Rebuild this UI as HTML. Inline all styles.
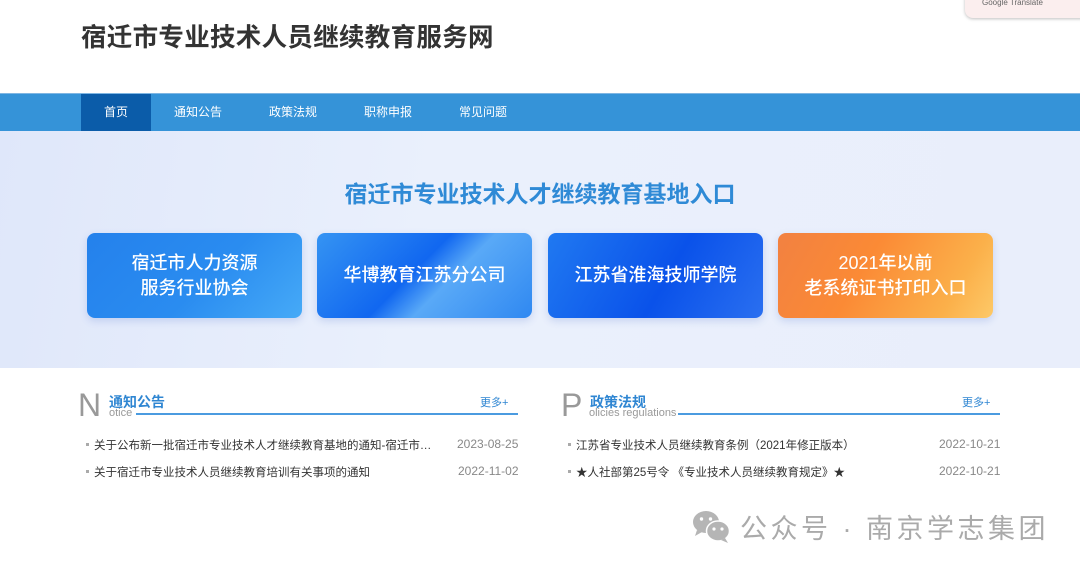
<!DOCTYPE html>
<html><head><meta charset="utf-8"><style>
*{margin:0;padding:0;box-sizing:border-box}
body{width:1080px;height:570px;overflow:hidden;background:#fff;font-family:"Liberation Sans","Noto Sans CJK SC",sans-serif;position:relative}
.a{position:absolute;white-space:nowrap}
.title{left:81px;top:17px;font-size:25.5px;font-weight:bold;color:#333;letter-spacing:0.3px}
.gt{left:965px;top:-10px;width:130px;height:28px;background:#fbeeee;border-radius:8px;box-shadow:0 1px 3px rgba(0,0,0,.25);font-size:8px;color:#666;padding:8px 0 0 17px}
.nav{left:0;top:93px;width:1080px;height:38px;background:#3593d8;border-top:1px solid #7fb6e3}
.nav span{position:absolute;top:0;height:37px;line-height:36px;color:#fff;font-size:12px;text-align:center}
.ban{left:0;top:131px;width:1080px;height:237px;background:linear-gradient(100deg,#dfe7fa 0%,#eaf0fc 40%,#e9eefb 100%)}
.h2{left:0;width:1080px;text-align:center;top:175px;font-size:23px;font-weight:bold;color:#2f8ad6}
.card{position:absolute;top:233px;width:215px;height:85px;border-radius:8px;color:#fff;font-size:18px;font-weight:500;display:flex;align-items:center;justify-content:center;text-align:center;line-height:25px;box-shadow:0 3px 8px rgba(60,100,200,.2);overflow:hidden}
.N{font-size:32px;color:#999;font-family:"Liberation Sans",sans-serif}
.ht{font-size:14px;font-weight:bold;color:#2f86d2}
.sub{font-size:11px;color:#999}
.more{font-size:11px;color:#2f86d2}
.li{font-size:11.5px;color:#333}
.dt{font-size:12px;color:#888}
.dot{width:3px;height:3px;background:#aaa}
.ln{height:2px;background:#4b9be0}
</style></head><body>
<div class="a title">宿迁市专业技术人员继续教育服务网</div>
<div class="a gt">Google Translate</div>
<div class="a nav">
<span style="left:81px;width:70px;background:#0b5ca9">首页</span>
<span style="left:163px;width:70px">通知公告</span>
<span style="left:258px;width:70px">政策法规</span>
<span style="left:353px;width:70px">职称申报</span>
<span style="left:448px;width:70px">常见问题</span>
</div>
<div class="a ban"></div>
<div class="a h2">宿迁市专业技术人才继续教育基地入口</div>
<div class="card" style="left:87px;background:linear-gradient(135deg,#2481ec 0%,#2a8cf0 55%,#46aaf7 100%)">宿迁市人力资源<br>服务行业协会</div>
<div class="card" style="left:317px;background:linear-gradient(135deg,#3594f3 0%,#1167f0 45%,#59a9f7 60%,#2f88f1 100%)">华博教育江苏分公司</div>
<div class="card" style="left:548px;background:linear-gradient(120deg,#2079f1 0%,#0a52ea 55%,#2a6ff0 100%)">江苏省淮海技师学院</div>
<div class="card" style="left:778px;background:linear-gradient(120deg,#f28141 0%,#fb8a35 40%,#fbb04a 80%,#fdc968 100%)">2021年以前<br>老系统证书打印入口</div>

<div class="a N" style="left:78px;top:387px">N</div>
<div class="a ht" style="left:109px;top:392px">通知公告</div>
<div class="a sub" style="left:109px;top:407px">otice</div>
<div class="a ln" style="left:136px;top:413px;width:382px"></div>
<div class="a more" style="left:480px;top:394px">更多+</div>
<div class="a dot" style="left:86px;top:443px"></div>
<div class="a li" style="left:94px;top:437px">关于公布新一批宿迁市专业技术人才继续教育基地的通知-宿迁市…</div>
<div class="a dt" style="left:457px;top:437px">2023-08-25</div>
<div class="a dot" style="left:86px;top:470px"></div>
<div class="a li" style="left:94px;top:464px">关于宿迁市专业技术人员继续教育培训有关事项的通知</div>
<div class="a dt" style="left:458px;top:464px">2022-11-02</div>

<div class="a N" style="left:561px;top:387px">P</div>
<div class="a ht" style="left:590px;top:392px">政策法规</div>
<div class="a sub" style="left:589px;top:407px">olicies regulations</div>
<div class="a ln" style="left:678px;top:413px;width:322px"></div>
<div class="a more" style="left:962px;top:394px">更多+</div>
<div class="a dot" style="left:568px;top:443px"></div>
<div class="a li" style="left:576px;top:437px">江苏省专业技术人员继续教育条例（2021年修正版本）</div>
<div class="a dt" style="left:939px;top:437px">2022-10-21</div>
<div class="a dot" style="left:568px;top:470px"></div>
<div class="a li" style="left:576px;top:464px">★人社部第25号令 《专业技术人员继续教育规定》★</div>
<div class="a dt" style="left:939px;top:464px">2022-10-21</div>

<svg class="a" style="left:692px;top:510px" width="40" height="34" viewBox="0 0 40 34">
<ellipse cx="14" cy="12" rx="13" ry="11" fill="#b5b5b5"/>
<path d="M5 20 L3 26 L10 22Z" fill="#b5b5b5"/>
<circle cx="9.5" cy="9" r="1.7" fill="#fff"/><circle cx="18.5" cy="9" r="1.7" fill="#fff"/>
<ellipse cx="26" cy="21" rx="11.5" ry="10" fill="#b5b5b5" stroke="#fff" stroke-width="1.5"/>
<path d="M33 28 L36 33 L29 30Z" fill="#b5b5b5"/>
<circle cx="22" cy="19" r="1.6" fill="#fff"/><circle cx="30" cy="19" r="1.6" fill="#fff"/>
</svg>
<div class="a" style="left:740px;top:507px;font-size:27px;color:#aaa;letter-spacing:3.5px">公众号 · 南京学志集团</div>
</body></html>
